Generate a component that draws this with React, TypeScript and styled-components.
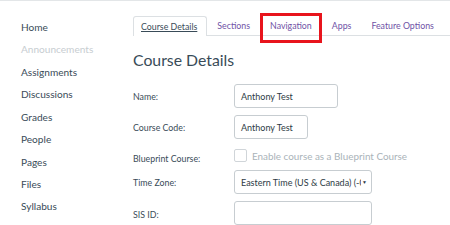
import React from "react";
import styled, { createGlobalStyle } from "styled-components";

const Global = createGlobalStyle`
  html, body { margin: 0; padding: 0; background: #fff; }
  body { font-family: Lato, "Open Sans", sans-serif; color: #2d3b45; }
  * { box-sizing: border-box; }
`;

const Page = styled.div`
  width: 450px;
  height: 225px;
  overflow: hidden;
  border-top: 1px solid #e3e6e8;
  display: flex;
`;

const Sidebar = styled.nav`
  width: 133px;
  flex: none;
  padding: 14.8px 0 0 21px;
  display: flex;
  flex-direction: column;
`;

const NavItem = styled.div<{ $muted?: boolean }>`
  font-size: 10.1px;
  line-height: 22.45px;
  color: ${(p) => (p.$muted ? "#c7cdd1" : "#394b58")};
`;

const Main = styled.main`
  flex: 1;
  padding-top: 15px;
  display: flex;
  flex-direction: column;
`;

const TabList = styled.div`
  display: flex;
  height: 23px;
  border-bottom: 1px solid #dce0e3;
  align-items: stretch;
`;

const Tab = styled.div<{ $active?: boolean }>`
  position: relative;
  padding: 0 10px;
  font-size: 8.8px;
  white-space: nowrap;
  display: flex;
  align-items: center;
  color: ${(p) => (p.$active ? "#394b58" : "#6f52a6")};
  text-decoration: ${(p) => (p.$active ? "underline" : "none")};
  ${(p) =>
    p.$active
      ? `border: 1px solid #dce0e3; border-bottom: none; border-radius: 3px 3px 0 0; background: #fff; margin-bottom: -1px; padding: 0 9px 0 7px;`
      : ``}
`;

const Highlight = styled.span`
  position: absolute;
  left: 0;
  right: 0;
  top: -3px;
  bottom: -8px;
  border: 3px solid #e8141c;
`;

const Heading = styled.h2`
  margin: 14px 0 0 0;
  font-size: 15.8px;
  font-weight: 400;
  line-height: 20px;
  color: #394b58;
`;

const Form = styled.div`
  display: flex;
  flex-direction: column;
  margin-top: 14px;
`;

const Row = styled.div<{ $gap: number; $h: number }>`
  display: flex;
  align-items: center;
  margin-top: ${(p) => p.$gap}px;
  height: ${(p) => p.$h}px;
`;

const Label = styled.div<{ $shift?: number }>`
  width: 101px;
  flex: none;
  font-size: 8.8px;
  color: #394b58;
  position: relative;
  top: ${(p) => p.$shift ?? 0}px;
`;

const Input = styled.div<{ $w: number }>`
  width: ${(p) => p.$w}px;
  height: 24px;
  border: 1px solid #c7cdd1;
  border-radius: 3px;
  padding: 0 6px;
  font-size: 9px;
  display: flex;
  align-items: center;
  color: #2d3b45;
  background: #fff;
`;

const Select = styled(Input)`
  justify-content: space-between;
  white-space: nowrap;
  overflow: hidden;
  padding-right: 4px;
`;

const SelectText = styled.span`
  width: 120px;
  overflow: hidden;
  flex: none;
`;

const Arrow = styled.span`
  font-size: 5px;
  color: #2d3b45;
`;

const CheckWrap = styled.label`
  display: flex;
  align-items: center;
  gap: 5px;
  font-size: 9.9px;
  color: #aab3b9;
  white-space: nowrap;
`;

const Box = styled.span`
  width: 13px;
  height: 13px;
  border: 1px solid #d0d5d9;
  border-radius: 2px;
  flex: none;
`;

export default function App() {
  const nav = [
    "Home",
    "Announcements",
    "Assignments",
    "Discussions",
    "Grades",
    "People",
    "Pages",
    "Files",
    "Syllabus",
  ];
  return (
    <>
      <Global />
      <Page>
        <Sidebar>
          {nav.map((n) => (
            <NavItem key={n} $muted={n === "Announcements"}>
              {n}
            </NavItem>
          ))}
        </Sidebar>
        <Main>
          <TabList>
            <Tab $active>Course Details</Tab>
            <Tab>Sections</Tab>
            <Tab>
              Navigation
              <Highlight />
            </Tab>
            <Tab>Apps</Tab>
            <Tab>Feature Options</Tab>
          </TabList>
          <Heading>Course Details</Heading>
          <Form>
            <Row $gap={0} $h={24}>
              <Label>Name:</Label>
              <Input $w={104}>Anthony Test</Input>
            </Row>
            <Row $gap={7} $h={24}>
              <Label>Course Code:</Label>
              <Input $w={74}>Anthony Test</Input>
            </Row>
            <Row $gap={10} $h={13}>
              <Label $shift={3}>Blueprint Course:</Label>
              <CheckWrap>
                <Box />
                Enable course as a Blueprint Course
              </CheckWrap>
            </Row>
            <Row $gap={8} $h={24}>
              <Label>Time Zone:</Label>
              <Select $w={138}>
                <SelectText>Eastern Time (US &amp; Canada) (-05:00)</SelectText>
                <Arrow>▼</Arrow>
              </Select>
            </Row>
            <Row $gap={7} $h={24}>
              <Label $shift={1}>SIS ID:</Label>
              <Input $w={138} />
            </Row>
          </Form>
        </Main>
      </Page>
    </>
  );
}
